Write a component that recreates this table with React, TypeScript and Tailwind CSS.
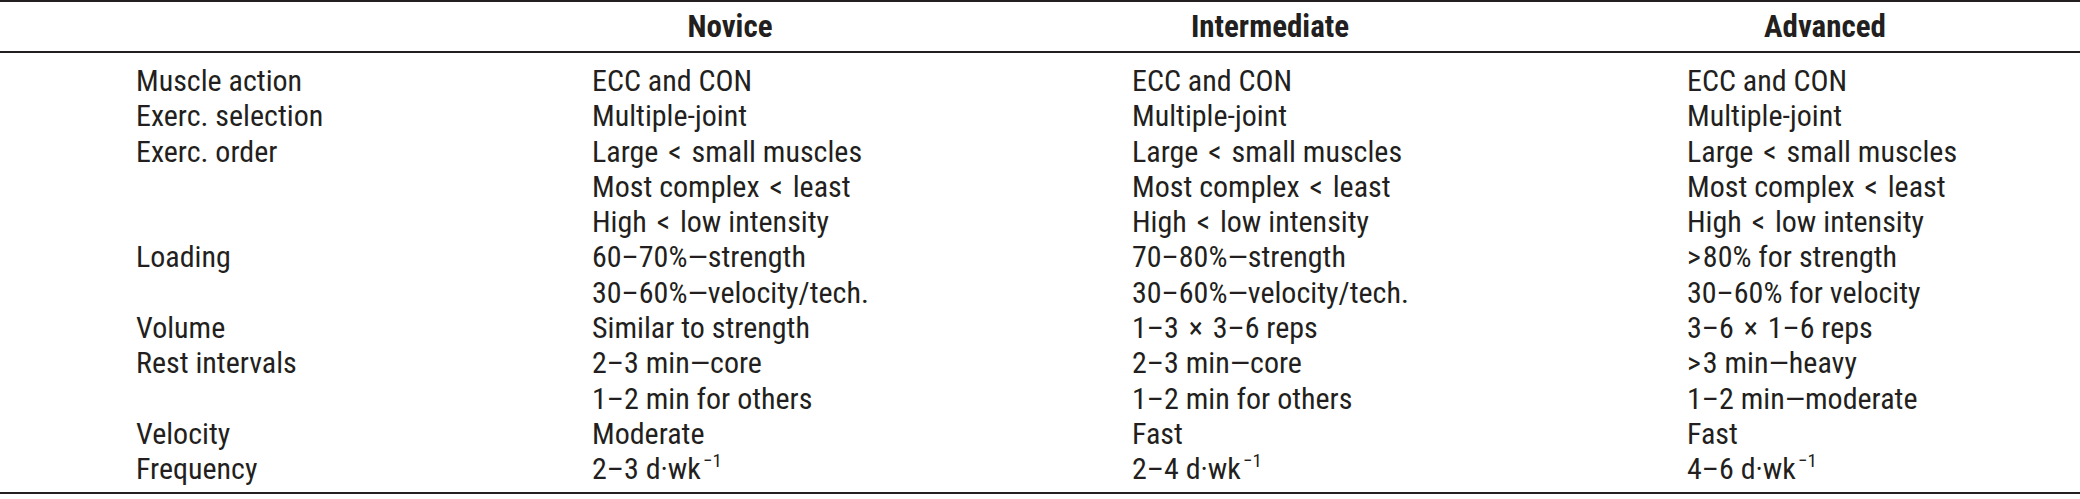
import React from 'react';

type Cell = React.ReactNode[];

const Lt = () => <span className="mx-[3px]">&lt;</span>;
const Times = () => <span className="mx-[3px]">×</span>;
const Per = ({ d }: { d: string }) => (
    <>
        {d} d·wk<sup className="text-[19px] -top-[12px] ml-[2px]">−1</sup>
    </>
);

const order: Cell = [
    <>Large <Lt /> small muscles</>,
    <>Most complex <Lt /> least</>,
    <>High <Lt /> low intensity</>,
];

const rows: { label: string; cells: Cell[] }[] = [
    { label: 'Muscle action', cells: [['ECC and CON'], ['ECC and CON'], ['ECC and CON']] },
    { label: 'Exerc. selection', cells: [['Multiple-joint'], ['Multiple-joint'], ['Multiple-joint']] },
    { label: 'Exerc. order', cells: [order, order, order] },
    {
        label: 'Loading',
        cells: [
            ['60–70%—strength', '30–60%—velocity/tech.'],
            ['70–80%—strength', '30–60%—velocity/tech.'],
            [<><span className="mr-[2px]">&gt;</span>80% for strength</>, '30–60% for velocity'],
        ],
    },
    {
        label: 'Volume',
        cells: [['Similar to strength'], [<>1–3 <Times /> 3–6 reps</>], [<>3–6 <Times /> 1–6 reps</>]],
    },
    {
        label: 'Rest intervals',
        cells: [
            ['2–3 min—core', '1–2 min for others'],
            ['2–3 min—core', '1–2 min for others'],
            [<><span className="mr-[2px]">&gt;</span>3 min—heavy</>, '1–2 min—moderate'],
        ],
    },
    { label: 'Velocity', cells: [['Moderate'], ['Fast'], ['Fast']] },
    { label: 'Frequency', cells: [[<Per d="2–3" />], [<Per d="2–4" />], [<Per d="4–6" />]] },
];

const headers = ['Novice', 'Intermediate', 'Advanced'];

export default function App() {
    return (
        <div
            className="w-[2080px] h-[499px] bg-white text-[#231f20] text-[30px] leading-[35.3px]"
            style={{ fontFamily: 'Roboto, "Liberation Sans", sans-serif', fontStretch: '75%' }}
        >
            <div className="border-t-2 border-b-2 border-[#231f20] h-[53px] grid grid-cols-[592px_540px_555px_1fr] items-center">
                <div />
                {headers.map((h) => (
                    <div key={h} className="w-[276px] text-center font-bold text-[31px]">
                        {h}
                    </div>
                ))}
            </div>
            <div className="border-b-2 border-[#231f20] pt-[10px] pb-[5px] pl-[136px] grid grid-cols-[456px_540px_555px_1fr]">
                {rows.map((r) => (
                    <React.Fragment key={r.label}>
                        <div className="whitespace-nowrap">{r.label}</div>
                        {r.cells.map((c, i) => (
                            <div key={i} className="flex flex-col whitespace-nowrap">
                                {c.map((line, j) => (
                                    <div key={j}>{line}</div>
                                ))}
                            </div>
                        ))}
                    </React.Fragment>
                ))}
            </div>
        </div>
    );
}
